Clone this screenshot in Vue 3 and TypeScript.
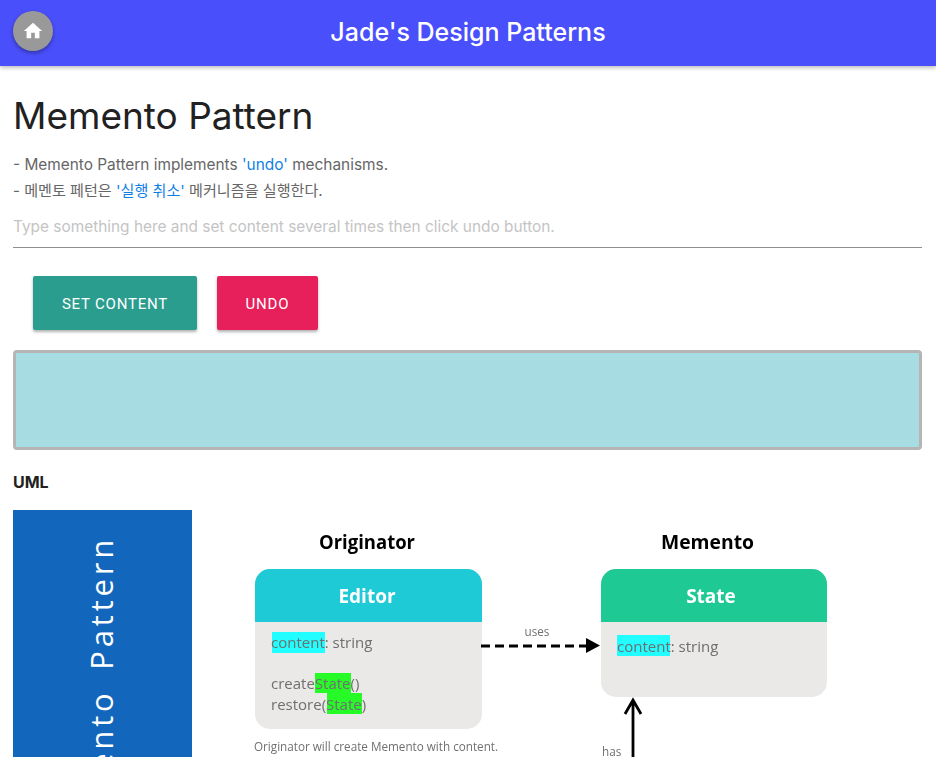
<script setup lang="ts">
import { ref } from 'vue'

const draft = ref('')
</script>

<template>
  <div class="page">
    <header class="bar">
      <button class="home" aria-label="Home">
        <svg viewBox="0 0 24 24" width="22" height="22"><path fill="#fff" d="M10 20v-6h4v6h5v-8h3L12 3 2 12h3v8z" /></svg>
      </button>
      <div class="brand">Jade's Design Patterns</div>
    </header>
    <main class="main">
      <h1 class="title">Memento Pattern</h1>
      <p class="line">- Memento Pattern implements <span class="accent">'undo'</span> mechanisms.</p>
      <p class="line ko">- 메멘토 페턴은 <span class="accent">'실행 취소'</span> 메커니즘을 실행한다.</p>
      <input v-model="draft" class="field" placeholder="Type something here and set content several times then click undo button." />
      <div class="actions">
        <button class="btn teal">SET CONTENT</button>
        <button class="btn pink">UNDO</button>
      </div>
      <div class="output"></div>
      <h2 class="uml">UML</h2>
      <svg class="diagram" viewBox="13 510 909 247" width="909" height="247">
        <rect x="13" y="510" width="179" height="247" fill="#1266bc" />
        <text class="side" transform="translate(113 536) rotate(-90)" text-anchor="end">Memento Pattern</text>

        <g class="soft">
          <text class="role" x="367" y="549" text-anchor="middle" textLength="96" lengthAdjust="spacingAndGlyphs">Originator</text>
          <text class="role" x="707.5" y="549" text-anchor="middle" textLength="93" lengthAdjust="spacingAndGlyphs">Memento</text>

          <rect x="255" y="569" width="227" height="160" rx="15" fill="#ebe9e8" />
          <path d="M255 622v-38a15 15 0 0 1 15-15h197a15 15 0 0 1 15 15v38z" fill="#1dcad6" />
          <text class="head" x="367" y="603" text-anchor="middle">Editor</text>
          <rect x="272" y="632" width="53" height="21" fill="#22fdff" />
          <rect x="315" y="673" width="36" height="20" fill="#27fb27" />
          <rect x="327" y="693" width="35" height="21" fill="#27fb27" />
          <text class="attr" x="271" y="648">content: string</text>
          <text class="attr" x="271" y="689">createState()</text>
          <text class="attr" x="271" y="710">restore(State)</text>
          <text class="note" x="254" y="751">Originator will create Memento with content.</text>

          <rect x="601" y="569" width="226" height="128" rx="15" fill="#ebe9e8" />
          <path d="M601 622v-38a15 15 0 0 1 15-15h196a15 15 0 0 1 15 15v38z" fill="#1fc994" />
          <text class="head" x="711" y="603" text-anchor="middle">State</text>
          <rect x="617" y="635" width="53" height="21" fill="#22fdff" />
          <text class="attr" x="617" y="652">content: string</text>

          <text class="note" x="537" y="636" text-anchor="middle">uses</text>
          <path d="M481 646H587" stroke="#000" stroke-width="2.8" stroke-dasharray="9 5" fill="none" />
          <path d="M586 638l14 7.500-14 7.500z" fill="#000" />

          <path d="M633 700V757M625 714l8-14 8 14" stroke="#000" stroke-width="2.8" fill="none" />
          <text class="note" x="602" y="756">has</text>
        </g>
      </svg>
    </main>
  </div>
</template>

<style scoped>
.page {
  height: 757px;
  overflow: hidden;
  background: #fff;
  font-family: Inter, "Noto Sans CJK KR", sans-serif;
}
.bar {
  height: 66px;
  display: flex;
  align-items: center;
  justify-content: center;
  position: relative;
  background: #4a4ffc;
  box-shadow: 0 2px 4px rgba(0, 0, 0, 0.25);
}
.home {
  position: absolute;
  left: 13px;
  top: 11px;
  width: 40px;
  height: 40px;
  padding: 0;
  border: 0;
  border-radius: 50%;
  background: #999;
  display: flex;
  align-items: center;
  justify-content: center;
  box-shadow: 0 2px 4px rgba(0, 0, 0, 0.35);
}
.brand {
  color: #fff;
  font-size: 25px;
  font-weight: 500;
  margin-top: -2px;
}
.main {
  padding: 0 14px 0 13px;
}
.title {
  margin: 26px 0 0;
  font-size: 37px;
  line-height: 48px;
  font-weight: 400;
  color: #212121;
}
.line {
  margin: 0;
  font-size: 15.4px;
  line-height: 26px;
  color: #666;
}
.title + .line {
  margin-top: 12px;
}
.ko {
  font-size: 15.1px;
}
.accent {
  color: #0f7fe8;
}
.field {
  display: block;
  box-sizing: border-box;
  width: 100%;
  height: 44px;
  padding: 2px 0 0;
  border: 0;
  border-bottom: 1px solid #8e8e8e;
  outline: none;
  font: 400 15.4px Inter, sans-serif;
  color: #333;
}
.field::placeholder {
  color: #c4c4c4;
  opacity: 1;
}
.actions {
  display: flex;
  gap: 20px;
  margin: 28px 0 20px 20px;
}
.btn {
  height: 54px;
  padding: 1px 0 0;
  border: 0;
  border-radius: 2px;
  color: #fff;
  font: 400 15px Roboto, sans-serif;
  letter-spacing: 0.8px;
  box-shadow: 0 2px 3px rgba(0, 0, 0, 0.3);
}
.teal {
  width: 164px;
  background: #2a9d8f;
}
.pink {
  width: 101px;
  background: #e71f5b;
}
.output {
  box-sizing: border-box;
  height: 100px;
  border: 3px solid #b5b5b5;
  border-radius: 4px;
  background: #a6dce2;
}
.uml {
  margin: 23px 0 18px;
  font-size: 16px;
  line-height: 19px;
  font-weight: 700;
  color: #212121;
}
.diagram {
  display: block;
}
.soft {
  filter: blur(0.3px);
}
.side {
  font: 400 31px "Open Sans", sans-serif;
  letter-spacing: 3.8px;
  word-spacing: 8px;
  fill: #fff;
}
.role {
  font: 700 19px "Open Sans", sans-serif;
  fill: #000;
}
.head {
  font: 700 19px "Open Sans", sans-serif;
  fill: #fff;
}
.attr {
  font: 400 15px "Open Sans", sans-serif;
  fill: #6f6f6f;
}
.note {
  font: 400 11.7px "Open Sans", sans-serif;
  fill: #707070;
}
</style>

<style>
html,
body {
  overflow: hidden;
}
</style>
